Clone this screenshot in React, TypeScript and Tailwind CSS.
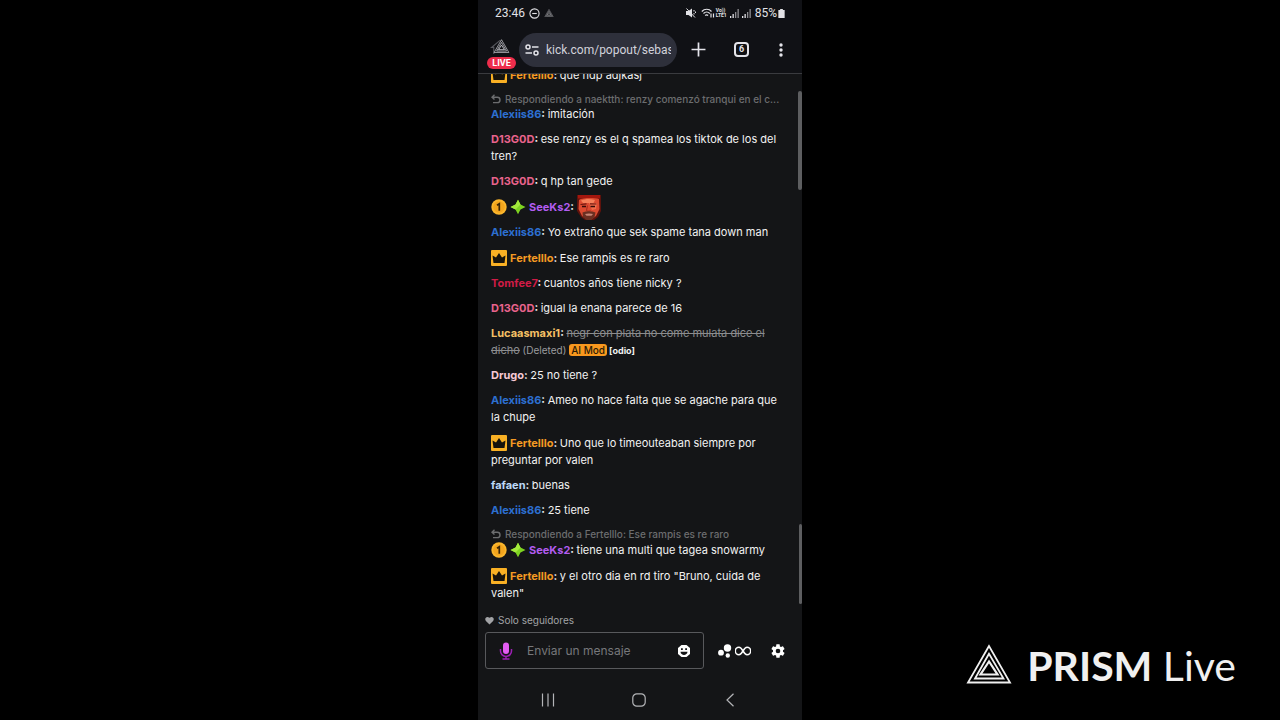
import { Fragment } from 'react';
import type { ReactNode } from 'react';

type Badge = 'crown' | 'medal' | 'spark';

interface Message {
  user: string;
  color: string;
  text?: string;
  badges?: Badge[];
  replyTo?: string;
  deleted?: boolean;
  emote?: boolean;
}

const BLUE = 'text-[#2d6fd0]';
const PINK = 'text-[#e9638c]';
const ORANGE = 'text-[#f59a23]';
const PURPLE = 'text-[#b25cf0]';

const messages: Message[] = [
  { user: 'Fertelllo', color: ORANGE, badges: ['crown'], text: 'que hdp adjkasj' },
  { user: 'Alexiis86', color: BLUE, text: 'imitación', replyTo: 'naektth: renzy comenzó tranqui en el c...' },
  { user: 'D13G0D', color: PINK, text: 'ese renzy es el q spamea los tiktok de los del tren?' },
  { user: 'D13G0D', color: PINK, text: 'q hp tan gede' },
  { user: 'SeeKs2', color: PURPLE, badges: ['medal', 'spark'], emote: true },
  { user: 'Alexiis86', color: BLUE, text: 'Yo extraño que sek spame tana down man' },
  { user: 'Fertelllo', color: ORANGE, badges: ['crown'], text: 'Ese rampis es re raro' },
  { user: 'Tomfee7', color: 'text-[#d01c46]', text: 'cuantos años tiene nicky ?' },
  { user: 'D13G0D', color: PINK, text: 'igual la enana parece de 16' },
  { user: 'Lucaasmaxi1', color: 'text-[#f5c065]', text: 'negr con plata no come mulata dice el dicho', deleted: true },
  { user: 'Drugo', color: 'text-[#f7c9d4]', text: '25 no tiene ?' },
  { user: 'Alexiis86', color: BLUE, text: 'Ameo no hace falta que se agache para que la chupe' },
  { user: 'Fertelllo', color: ORANGE, badges: ['crown'], text: 'Uno que lo timeouteaban siempre por preguntar por valen' },
  { user: 'fafaen', color: 'text-[#bcd8f8]', text: 'buenas' },
  { user: 'Alexiis86', color: BLUE, text: '25 tiene' },
  { user: 'SeeKs2', color: PURPLE, badges: ['medal', 'spark'], text: 'tiene una multi que tagea snowarmy', replyTo: 'Fertelllo: Ese rampis es re raro' },
  { user: 'Fertelllo', color: ORANGE, badges: ['crown'], text: 'y el otro dia en rd tiro "Bruno, cuida de valen"' },
];

function PrismLogo({ className }: { className?: string }) {
  return (
    <svg viewBox="0 0 46 40" className={className} fill="none" stroke="currentColor" strokeWidth="1.8">
      <path d="M23 2 2 38.500h42z" />
      <path d="M23 9.800 9 34.500h28.500z" />
      <path d="M23 17.500 14.500 30.500h17z" strokeWidth="2.200" />
    </svg>
  );
}

function CrownBadge() {
  return (
    <svg viewBox="0 0 16 16" className="my-px mr-[3px] inline-block size-4 align-[-5px]">
      <rect width="16" height="16" rx="1" fill="#f9b024" />
      <path d="M1.500 5.500 5 7.500 8 3l3 4.500 3.500-2-1 7.500h-11z" fill="#17130c" />
    </svg>
  );
}

function MedalBadge() {
  return (
    <svg viewBox="0 0 16 16" className="my-px mr-[3px] inline-block size-4 align-[-5px]">
      <circle cx="8" cy="8" r="7.700" fill="#fbb62c" />
      <circle cx="8" cy="8" r="5.800" fill="#f3a51d" />
      <path d="M6 6.200 8.300 4.700V11.800" fill="none" stroke="#3b2506" strokeWidth="1.700" />
    </svg>
  );
}

function SparkBadge() {
  return (
    <svg viewBox="0 0 16 16" className="my-px mr-[3px] inline-block size-4 align-[-5px]">
      <path d="M8 .8 10.500 5.500 15.500 8l-5 2.500L8 15.200 5.500 10.500.500 8l5-2.500z" fill="#7ed321" />
      <path d="M8 .8 10.500 5.500 8 8 5.500 10.500.500 8l5-2.500z" fill="#a4ea3c" />
    </svg>
  );
}

function FaceEmote() {
  return (
    <svg viewBox="0 0 24 25" className="-my-1 inline-block h-[25px] w-6 align-[-5px]">
      <path d="M0 0h24v16l-3 6-4 3H8l-4-3-4-6z" fill="#5e120c" />
      <path d="M1 0h22v3.500H1z" fill="#a3160d" />
      <path d="M2 5C5 2.500 18 2.500 22 4l.5 10-3.500 7-4 3H9l-4-3-3.500-7z" fill="#dd4a30" />
      <path d="M4 5.500c5-2 9-2 14-.5l-1.500 3H6z" fill="#f5805a" />
      <path d="M12 8h8l-1 6-4 1z" fill="#f06c49" />
      <path d="M3.500 9.500 9.500 8.800M13 8.800 19.500 9" stroke="#6d1710" strokeWidth="1.200" />
      <path d="M5 11.500h4M13.500 11.500h4.500" stroke="#340b08" strokeWidth="1.300" />
      <path d="M10.500 10.500 9.500 15.500c1 .8 3 .8 4 0" fill="none" stroke="#a52a1c" />
      <path d="M5.500 17.500c4-1.800 9-1.800 13 0L17.500 22l-3 3h-5L6 22z" fill="#6b2f22" />
      <path d="M8 19c2-.8 6-.8 8 0l-1.500 1.800h-5z" fill="#c98575" />
    </svg>
  );
}

const badgeIcons: Record<Badge, ReactNode> = {
  crown: <CrownBadge />,
  medal: <MedalBadge />,
  spark: <SparkBadge />,
};

function ChatMessage({ message }: { message: Message }) {
  const { user, color, text, badges = [], replyTo, deleted, emote } = message;
  return (
    <li className="shrink-0 py-1 text-[11px] leading-[17px] text-[#f2f2f2]">
      {replyTo && (
        <div className="flex items-center gap-1 text-[10px] leading-[14px] font-medium text-[#6c6d6f]">
          <svg viewBox="0 0 10 10" className="size-[10px] shrink-0" fill="none" stroke="currentColor" strokeWidth="1.400">
            <path d="M3.500.8 1 3.200l2.500 2.400M1 3.200h5.300a2.700 2.700 0 0 1 0 5.400H2" />
          </svg>
          <span className="truncate">Respondiendo a {replyTo}</span>
        </div>
      )}
      {badges.map((badge) => (
        <Fragment key={badge}>{badgeIcons[badge]}</Fragment>
      ))}
      <span className={`font-bold ${color}`}>{user}</span>
      <span className="font-bold">: </span>
      {emote && <FaceEmote />}
      {deleted ? (
        <>
          <span className="text-[#8b8c8e] line-through">{text}</span>
          <span className="text-[10px] text-[#9b9c9e]"> (Deleted) </span>
          <span className="rounded-[3px] bg-[#f9981e] px-0.5 text-[10px] font-medium text-[#2b1a05]">AI Mod</span>
          <span className="text-[9px] font-bold"> [odio]</span>
        </>
      ) : (
        text
      )}
    </li>
  );
}

function StatusBar() {
  return (
    <div className="flex h-[26px] items-center justify-between pr-[17px] pl-[17px] font-['Roboto',sans-serif] text-xs text-[#e2e2e6]">
      <div className="flex items-center gap-1">
        <span>23:46</span>
        <svg viewBox="0 0 12 12" className="size-[11px]" fill="none" stroke="currentColor" strokeWidth="1.200">
          <circle cx="6" cy="6" r="5" />
          <path d="M3.500 6h5" />
        </svg>
        <PrismLogo className="h-2 w-[10px] text-[#d0d0d4]" />
      </div>
      <div className="flex items-center gap-[3px]">
        <svg viewBox="0 0 10 10" className="size-[10px]" fill="currentColor">
          <path d="M0 3h2.500L6 .5v9L2.500 7H0z" />
          <path d="M.5.500l8.500 9M8 2v1.500M8 5v1.500M9.500 3.500V5" stroke="currentColor" />
        </svg>
        <svg viewBox="0 0 14 10" className="ml-0.5 h-[10px] w-[14px]" fill="none" stroke="currentColor" strokeWidth="1.200">
          <path d="M.8 3.500C3.500.500 8 .5 10.500 3.500M2.500 5.500c1.800-1.800 4.500-1.800 6.300 0M4.200 7.500c.9-.9 2-.9 2.900 0M10 5.500v4M12.500 9.500v-4" />
        </svg>
        <span className="-ml-0.5 flex flex-col text-[5px] leading-[5px] font-bold">
          <span>Vo))</span>
          <span>LTE1</span>
        </span>
        <SignalBars />
        <SignalBars />
        <span className="ml-px">85%</span>
        <svg viewBox="0 0 7 10" className="-ml-0.5 h-[9px] w-[7px]" fill="currentColor">
          <path d="M2 0h3v1h2v9H0V1h2z" />
        </svg>
      </div>
    </div>
  );
}

function SignalBars() {
  return (
    <svg viewBox="0 0 9 9" className="size-[9px]" fill="currentColor">
      <path d="M0 7h1.300v2H0zM2.500 5h1.300v4H2.500z" />
      <path d="M5 3h1.300v6H5zM7.500 0h1.300v9H7.500z" opacity=".6" />
    </svg>
  );
}

function BrowserBar() {
  return (
    <div className="flex h-[48px] items-center border-b border-[#3a3b3f] pr-[17px] pl-[10px] text-[#e4e4ea]">
      <a href="#live" className="relative flex h-[38px] w-[27px] shrink-0 flex-col items-center">
        <svg viewBox="0 0 22 18" className="absolute top-2 left-0.5 h-4 w-5" fill="none" stroke="#55565c" strokeWidth="1.300">
          <path d="M4 17V9.500L1.500 9.500 11 1.500" />
        </svg>
        <PrismLogo className="relative mt-2 h-[14px] w-[17px]" />
        <span className="absolute bottom-0 rounded-full bg-[#ee2d4c] px-[5px] font-['Roboto',sans-serif] text-[9px] leading-[12px] font-bold text-white">
          LIVE
        </span>
      </a>
      <div className="ml-1 flex h-[34px] min-w-0 flex-1 items-center gap-[7px] rounded-full bg-[#2e303b] px-[6px]">
        <svg viewBox="0 0 14 12" className="h-3 w-[14px] shrink-0" fill="none" stroke="currentColor" strokeWidth="1.500">
          <circle cx="3" cy="3" r="2" />
          <path d="M7 3h6.500M.5 9H7" />
          <circle cx="11" cy="9" r="2" />
        </svg>
        <input
          aria-label="URL"
          defaultValue="kick.com/popout/sebastian/chat"
          className="min-w-0 flex-1 bg-transparent font-['Roboto',sans-serif] text-xs text-[#d2d3dc] outline-none"
        />
      </div>
      <div className="ml-[14px] flex shrink-0 items-center gap-7">
        <button aria-label="Nueva pestaña">
          <svg viewBox="0 0 14 14" className="block size-[15px]" stroke="currentColor" strokeWidth="1.600">
            <path d="M7 .5v13M.5 7h13" />
          </svg>
        </button>
        <button className="flex size-[15px] items-center justify-center rounded-[4px] border-2 border-current font-['Roboto',sans-serif] text-[9px] leading-none font-bold">
          6
        </button>
        <button aria-label="Menú" className="px-0.5">
          <svg viewBox="0 0 4 14" className="block h-[14px] w-1" fill="currentColor">
            <circle cx="2" cy="2" r="1.700" />
            <circle cx="2" cy="7" r="1.700" />
            <circle cx="2" cy="12" r="1.700" />
          </svg>
        </button>
      </div>
    </div>
  );
}

function Composer() {
  return (
    <div className="pr-4 pl-[7px]">
      <p className="flex h-6 items-center gap-1 text-[10px] text-[#a2a3a6]">
        <svg viewBox="0 0 10 9" className="h-[9px] w-[9px]" fill="currentColor">
          <path d="M5 9 1 5C-1 2.500 1.500-1 5 1.500 8.500-1 11 2.500 9 5z" />
        </svg>
        Solo seguidores
      </p>
      <form className="flex items-center">
        <div className="flex h-[37px] min-w-0 flex-1 items-center rounded-[3px] border border-[#58595c] px-[13px]">
          <svg viewBox="0 0 14 18" className="h-[18px] w-[14px] shrink-0" fill="none" stroke="#9d1fb5" strokeWidth="1.500">
            <path d="M1.500 7v2a5.500 5.500 0 0 0 11 0V7M7 14.500V17M3.500 17h7" />
            <rect x="4" y=".5" width="6" height="11.500" rx="3" fill="#e35cf2" stroke="none" />
          </svg>
          <input
            aria-label="Enviar un mensaje"
            placeholder="Enviar un mensaje"
            className="ml-[14px] min-w-0 flex-1 bg-transparent text-xs text-white outline-none placeholder:text-[#77787b]"
          />
          <button type="button" aria-label="Emotes">
            <svg viewBox="0 0 12 12" className="block size-3">
              <path d="M3.500 0h5L12 3v6l-3.500 3h-5L0 9V3z" fill="#fff" />
              <path d="M3 3.300h1.800v1.800H3zM7.200 3.300H9v1.800H7.200zM2.500 6.800h7C9.300 11 2.700 11 2.500 6.800z" fill="#141517" />
            </svg>
          </button>
        </div>
        <button type="button" aria-label="Puntos" className="ml-[14px] flex items-center gap-[3px] text-white">
          <svg viewBox="0 0 14 14" className="size-[14px]" fill="currentColor">
            <circle cx="9.500" cy="4" r="3.700" />
            <circle cx="3" cy="8.700" r="2.900" />
            <circle cx="9.800" cy="11.500" r="2.200" />
          </svg>
          <svg viewBox="0 0 16 10" className="h-[10px] w-4" fill="none" stroke="currentColor" strokeWidth="1.500">
            <path d="M8 5C6.500 2.500 5.500 1.300 4 1.300a3.500 3.500 0 0 0 0 7.400C5.500 8.700 6.500 7.500 8 5s2.500-3.700 4-3.700a3.500 3.500 0 0 1 0 7.400C10.500 8.700 9.500 7.500 8 5z" />
          </svg>
        </button>
        <button type="button" aria-label="Ajustes" className="ml-[19px] text-white">
          <svg viewBox="0 0 24 24" className="block size-4" fill="currentColor">
            <path d="M19.430 12.980c.04-.32.070-.64.070-.98s-.03-.66-.07-.98l2.110-1.650c.19-.15.240-.42.120-.64l-2-3.460c-.12-.22-.39-.3-.61-.22l-2.490 1c-.52-.4-1.080-.73-1.690-.98l-.38-2.650A.49.490 0 0 0 14 2h-4c-.25 0-.46.180-.49.420l-.38 2.650c-.61.250-1.170.590-1.690.980l-2.490-1c-.23-.09-.49 0-.61.220l-2 3.460c-.13.220-.07.490.120.640l2.110 1.650c-.04.320-.07.650-.07.980s.030.660.070.980l-2.110 1.650c-.19.150-.24.420-.12.640l2 3.460c.12.220.390.300.610.220l2.490-1c.52.400 1.080.730 1.690.980l.38 2.650c.03.240.240.420.490.420h4c.25 0 .46-.18.490-.42l.38-2.650c.61-.25 1.170-.59 1.690-.98l2.490 1c.23.090.490 0 .61-.22l2-3.460c.12-.22.070-.49-.12-.64zM12 15.500a3.500 3.500 0 1 1 0-7 3.500 3.500 0 0 1 0 7z" />
          </svg>
        </button>
      </form>
    </div>
  );
}

function NavBar() {
  return (
    <nav className="mt-[11px] flex h-10 items-center justify-around pr-[27px] pl-6 text-[#b4b5b8]">
      <button aria-label="Recientes">
        <svg viewBox="0 0 14 14" className="block size-[14px]" stroke="currentColor" strokeWidth="1.200">
          <path d="M1.500.5v13M7 .5v13M12.500.500v13" />
        </svg>
      </button>
      <button aria-label="Inicio">
        <svg viewBox="0 0 14 14" className="block size-[14px]" fill="none" stroke="currentColor" strokeWidth="1.200">
          <rect x=".8" y=".8" width="12.400" height="12.400" rx="4" />
        </svg>
      </button>
      <button aria-label="Atrás">
        <svg viewBox="0 0 14 14" className="block size-[14px]" fill="none" stroke="currentColor" strokeWidth="1.200">
          <path d="M10.500.800 4 7l6.500 6.200" />
        </svg>
      </button>
    </nav>
  );
}

export default function App() {
  return (
    <div className="relative flex h-screen justify-center overflow-hidden bg-black">
      <main className="flex w-full max-w-[324px] flex-col bg-[#141517] font-['Inter',sans-serif]">
        <header className="bg-[#101115]">
          <StatusBar />
          <BrowserBar />
        </header>
        <section className="relative flex min-h-0 flex-1 flex-col justify-end overflow-hidden">
          <ul className="flex flex-col pr-4 pb-0.5 pl-[13px]">
            {messages.map((message, i) => (
              <ChatMessage key={i} message={message} />
            ))}
          </ul>
          <div className="absolute top-[17px] right-0 h-[99px] w-1 rounded-full bg-[#5d5e60]" />
          <div className="absolute right-0 bottom-1 h-20 w-[3px] rounded-full bg-[#5d5e60]" />
        </section>
        <Composer />
        <NavBar />
      </main>
      <div className="absolute right-11 bottom-[29px] flex items-center gap-[15px] font-['Lato',sans-serif] text-[41px] leading-[50px] text-[#f0f0f0]">
        <PrismLogo className="mb-1 h-10 w-[46px]" />
        <p>
          <b className="font-bold">PRISM</b> Live
        </p>
      </div>
    </div>
  );
}
